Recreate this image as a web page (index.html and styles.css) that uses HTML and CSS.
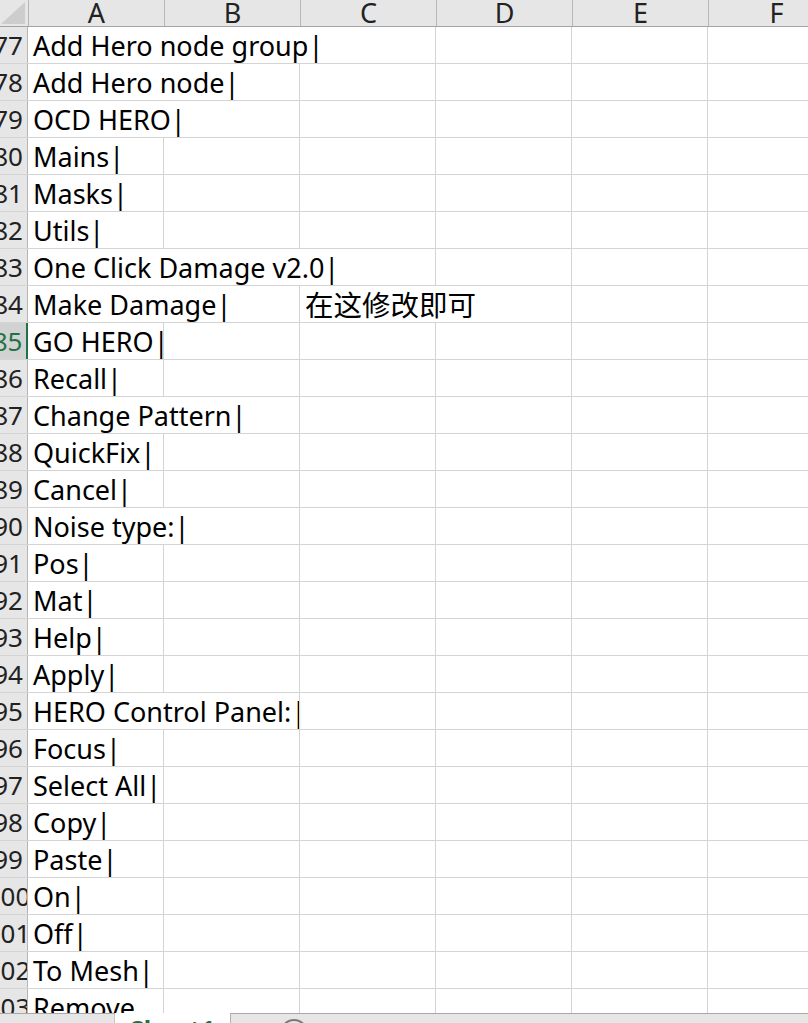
FILE: index.html
```html
<!DOCTYPE html>
<html lang="en">
<head>
<meta charset="utf-8">
<link rel="stylesheet" href="styles.css">
</head>
<body>
<div class="sheet">
  <div class="hdr">
    <div class="corner"><span class="tri"></span></div>
    <div class="col">A</div><div class="col">B</div><div class="col">C</div><div class="col">D</div><div class="col">E</div><div class="col last">F</div>
  </div>
  <div class="row"><div class="rn"><span>77</span></div><div class="c nb"><span class="t">Add Hero node group|</span></div><div class="c nb"></div><div class="c"></div><div class="c"></div><div class="c"></div><div class="c"></div></div>
  <div class="row"><div class="rn"><span>78</span></div><div class="c nb"><span class="t">Add Hero node|</span></div><div class="c"></div><div class="c"></div><div class="c"></div><div class="c"></div><div class="c"></div></div>
  <div class="row"><div class="rn"><span>79</span></div><div class="c nb"><span class="t">OCD HERO|</span></div><div class="c"></div><div class="c"></div><div class="c"></div><div class="c"></div><div class="c"></div></div>
  <div class="row"><div class="rn"><span>80</span></div><div class="c"><span class="t">Mains|</span></div><div class="c"></div><div class="c"></div><div class="c"></div><div class="c"></div><div class="c"></div></div>
  <div class="row"><div class="rn"><span>81</span></div><div class="c"><span class="t">Masks|</span></div><div class="c"></div><div class="c"></div><div class="c"></div><div class="c"></div><div class="c"></div></div>
  <div class="row"><div class="rn"><span>82</span></div><div class="c"><span class="t">Utils|</span></div><div class="c"></div><div class="c"></div><div class="c"></div><div class="c"></div><div class="c"></div></div>
  <div class="row"><div class="rn"><span>83</span></div><div class="c nb"><span class="t">One Click Damage v2.0|</span></div><div class="c nb"></div><div class="c"></div><div class="c"></div><div class="c"></div><div class="c"></div></div>
  <div class="row"><div class="rn"><span>84</span></div><div class="c nb"><span class="t">Make Damage|</span></div><div class="c"></div><div class="c nb"><span class="t cjk">在这修改即可</span></div><div class="c"></div><div class="c"></div><div class="c"></div></div>
  <div class="row"><div class="rn sel"><span>85</span></div><div class="c"><span class="t">GO HERO|</span></div><div class="c"></div><div class="c"></div><div class="c"></div><div class="c"></div><div class="c"></div></div>
  <div class="row"><div class="rn"><span>86</span></div><div class="c"><span class="t">Recall|</span></div><div class="c"></div><div class="c"></div><div class="c"></div><div class="c"></div><div class="c"></div></div>
  <div class="row"><div class="rn"><span>87</span></div><div class="c nb"><span class="t">Change Pattern|</span></div><div class="c"></div><div class="c"></div><div class="c"></div><div class="c"></div><div class="c"></div></div>
  <div class="row"><div class="rn"><span>88</span></div><div class="c"><span class="t">QuickFix|</span></div><div class="c"></div><div class="c"></div><div class="c"></div><div class="c"></div><div class="c"></div></div>
  <div class="row"><div class="rn"><span>89</span></div><div class="c"><span class="t">Cancel|</span></div><div class="c"></div><div class="c"></div><div class="c"></div><div class="c"></div><div class="c"></div></div>
  <div class="row"><div class="rn"><span>90</span></div><div class="c nb"><span class="t">Noise type:|</span></div><div class="c"></div><div class="c"></div><div class="c"></div><div class="c"></div><div class="c"></div></div>
  <div class="row"><div class="rn"><span>91</span></div><div class="c"><span class="t">Pos|</span></div><div class="c"></div><div class="c"></div><div class="c"></div><div class="c"></div><div class="c"></div></div>
  <div class="row"><div class="rn"><span>92</span></div><div class="c"><span class="t">Mat|</span></div><div class="c"></div><div class="c"></div><div class="c"></div><div class="c"></div><div class="c"></div></div>
  <div class="row"><div class="rn"><span>93</span></div><div class="c"><span class="t">Help|</span></div><div class="c"></div><div class="c"></div><div class="c"></div><div class="c"></div><div class="c"></div></div>
  <div class="row"><div class="rn"><span>94</span></div><div class="c"><span class="t">Apply|</span></div><div class="c"></div><div class="c"></div><div class="c"></div><div class="c"></div><div class="c"></div></div>
  <div class="row"><div class="rn"><span>95</span></div><div class="c nb"><span class="t">HERO Control Panel:|</span></div><div class="c"></div><div class="c"></div><div class="c"></div><div class="c"></div><div class="c"></div></div>
  <div class="row"><div class="rn"><span>96</span></div><div class="c"><span class="t">Focus|</span></div><div class="c"></div><div class="c"></div><div class="c"></div><div class="c"></div><div class="c"></div></div>
  <div class="row"><div class="rn"><span>97</span></div><div class="c"><span class="t">Select All|</span></div><div class="c"></div><div class="c"></div><div class="c"></div><div class="c"></div><div class="c"></div></div>
  <div class="row"><div class="rn"><span>98</span></div><div class="c"><span class="t">Copy|</span></div><div class="c"></div><div class="c"></div><div class="c"></div><div class="c"></div><div class="c"></div></div>
  <div class="row"><div class="rn"><span>99</span></div><div class="c"><span class="t">Paste|</span></div><div class="c"></div><div class="c"></div><div class="c"></div><div class="c"></div><div class="c"></div></div>
  <div class="row"><div class="rn"><span>100</span></div><div class="c"><span class="t">On|</span></div><div class="c"></div><div class="c"></div><div class="c"></div><div class="c"></div><div class="c"></div></div>
  <div class="row"><div class="rn"><span>101</span></div><div class="c"><span class="t">Off|</span></div><div class="c"></div><div class="c"></div><div class="c"></div><div class="c"></div><div class="c"></div></div>
  <div class="row"><div class="rn"><span>102</span></div><div class="c"><span class="t">To Mesh|</span></div><div class="c"></div><div class="c"></div><div class="c"></div><div class="c"></div><div class="c"></div></div>
  <div class="row"><div class="rn"><span>103</span></div><div class="c"><span class="t">Remove</span></div><div class="c"></div><div class="c"></div><div class="c"></div><div class="c"></div><div class="c"></div></div>
</div>
<div class="tabs">
  <div class="tab-pad"></div>
  <div class="tab">Sheet1</div>
  <div class="add"></div>
</div>
</body>
</html>
```

FILE: styles.css
```css
html, body {
  margin: 0;
  padding: 0;
  width: 808px;
  height: 1023px;
  overflow: hidden;
  background: #ffffff;
}
body {
  font-family: "Noto Sans", "Noto Sans CJK SC", sans-serif;
  color: #000;
  position: relative;
}
.sheet {
  width: 808px;
  height: 1014px;
  overflow: hidden;
}
.hdr {
  display: flex;
  height: 26px;
  background: #e6e6e6;
  border-bottom: 1px solid #a3a3a3;
}
.corner {
  flex: 0 0 28px;
  border-right: 1px solid #b5b5b5;
  position: relative;
  overflow: hidden;
}
.tri {
  position: absolute;
  right: 3px;
  bottom: 2px;
  width: 0;
  height: 0;
  border-style: solid;
  border-width: 0 0 22px 24px;
  border-color: transparent transparent #cdcdcd transparent;
}
.col {
  flex: 0 0 135px;
  border-right: 1px solid #b8b8b8;
  text-align: center;
  font-size: 27px;
  line-height: 26px;
  color: #222;
}
.row {
  display: flex;
  height: 36px;
  border-bottom: 1px solid #d4d4d4;
}
.rn {
  flex: 0 0 28px;
  box-sizing: border-box;
  padding-right: 11px;
  background: #e6e6e6;
  border-right: 1px solid #b5b5b5;
  display: flex;
  justify-content: center;
  overflow: hidden;
  font-size: 26px;
  line-height: 37px;
  color: #222;
  white-space: nowrap;
}
.rn span {
  flex: 0 0 auto;
}
.rn.sel {
  background: #d2d2d2;
  color: #217346;
  border-right: 2px solid #217346;
}
.c {
  flex: 0 0 135px;
  border-right: 1px solid #d4d4d4;
  position: relative;
  white-space: nowrap;
}
.c.nb {
  border-right-color: transparent;
}
.t {
  position: absolute;
  left: 5px;
  bottom: 0;
  font-size: 27px;
  line-height: 35px;
  color: #000;
}
.t.cjk {
  font-size: 28.5px;
  line-height: 36px;
  font-family: "Noto Sans CJK SC", sans-serif;
}
.tabs {
  position: absolute;
  left: 0;
  top: 1013px;
  width: 808px;
  height: 10px;
  background: #e6e6e6;
  border-top: 1px solid #a8a8a8;
  display: flex;
}
.tab-pad {
  flex: 0 0 114px;
  border-right: 1px solid #c6c6c6;
}
.tab {
  flex: 0 0 115px;
  background: #ffffff;
  margin-top: -1px;
  color: #217346;
  font-weight: bold;
  font-size: 25px;
  line-height: 32px;
  text-align: center;
  overflow: hidden;
  height: 11px;
  border-right: 1px solid #b0b0b0;
}
.add {
  margin-left: 49px;
  margin-top: 5px;
  width: 24px;
  height: 24px;
  border: 2px solid #7a7a7a;
  border-radius: 50%;
  flex: 0 0 auto;
}
```
